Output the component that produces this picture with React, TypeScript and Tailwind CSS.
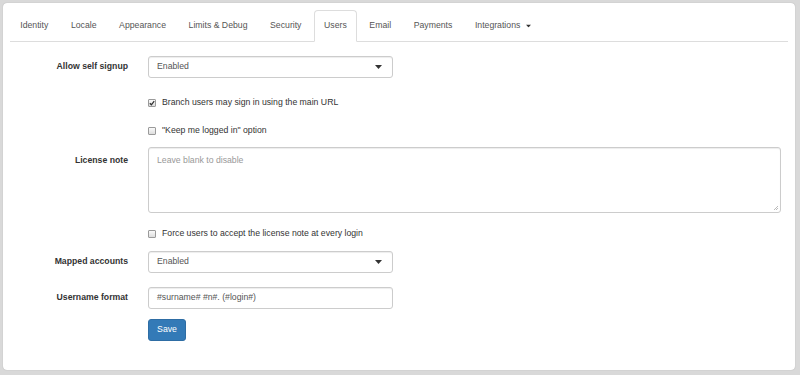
import React from "react";

const tabs = ["Identity", "Locale", "Appearance", "Limits & Debug", "Security", "Users", "Email", "Payments", "Integrations"];

function Caret({ className = "" }: { className?: string }) {
  return (
    <svg width="7" height="4" viewBox="0 0 7 4" className={className}>
      <path d="M0 0 L7 0 L3.5 4 Z" fill="#333" />
    </svg>
  );
}

function Check({ checked }: { checked?: boolean }) {
  return (
    <span className="relative inline-flex h-[8px] w-[8px] shrink-0 items-center justify-center rounded-[1px] border border-[#9a9a9a] bg-gradient-to-b from-[#fafafa] to-[#dedede]">
      {checked && (
        <svg width="6" height="6" viewBox="0 0 6 6" className="absolute">
          <path d="M0.8 3.2 L2.4 4.8 L5.2 1.2" stroke="#333" strokeWidth="1.3" fill="none" />
        </svg>
      )}
    </span>
  );
}

function Label({ children }: { children: React.ReactNode }) {
  return <div className="w-[118px] shrink-0 text-right font-bold text-[#333]">{children}</div>;
}

function Select({ value }: { value: string }) {
  return (
    <div className="flex h-[22px] w-[245px] items-center justify-between rounded-[3px] border border-[#ccc] bg-white pl-[8px] pr-[10px] text-[#555] shadow-[inset_0_1px_1px_rgba(0,0,0,0.075)]">
      <span>{value}</span>
      <Caret />
    </div>
  );
}

export default function App() {
  return (
    <div
      className="h-[375px] w-[800px] bg-[#d9d9d9] pb-[5px] pl-[3px] pr-[5px] pt-[3px] text-[8.7px] text-[#333]"
      style={{ fontFamily: '"Liberation Sans", Arial, sans-serif' }}
    >
      <div className="flex h-full flex-col rounded-[4px] bg-white px-[7px] pt-[7px] shadow-[0_0_1px_rgba(0,0,0,0.3)]">
        <div className="flex border-b border-[#ddd]">
          {tabs.map((t) => {
            const active = t === "Users";
            return (
              <div
                key={t}
                className={
                  "-mb-px mr-[2px] flex h-[32px] items-center gap-[5px] rounded-t-[4px] border px-[9.3px] " +
                  (active ? "border-[#ddd] border-b-white bg-white text-[#555]" : "border-transparent text-[#555]")
                }
              >
                <span>{t}</span>
                {t === "Integrations" && <Caret className="scale-75" />}
              </div>
            );
          })}
        </div>

        <div className="mt-[14px] flex items-center gap-[20px]">
          <Label>Allow self signup</Label>
          <Select value="Enabled" />
        </div>

        <div className="ml-[138px] mt-[17px] flex h-[16px] items-center gap-[6px]">
          <Check checked />
          <span>Branch users may sign in using the main URL</span>
        </div>

        <div className="ml-[138px] mt-[12px] flex h-[16px] items-center gap-[6px]">
          <Check />
          <span>"Keep me logged in" option</span>
        </div>

        <div className="mt-[8px] flex items-start gap-[20px]">
          <div className="pt-[7px]">
            <Label>License note</Label>
          </div>
          <div className="relative h-[66px] w-[633px] rounded-[3px] border border-[#ccc] px-[8px] pt-[6px] text-[#999] shadow-[inset_0_1px_1px_rgba(0,0,0,0.075)]">
            Leave blank to disable
            <svg width="5" height="5" viewBox="0 0 5 5" className="absolute bottom-[2px] right-[2px]">
              <path d="M1 5 L5 1 M3 5 L5 3" stroke="#aaa" strokeWidth="0.8" />
            </svg>
          </div>
        </div>

        <div className="ml-[138px] mt-[13px] flex h-[16px] items-center gap-[6px]">
          <Check />
          <span>Force users to accept the license note at every login</span>
        </div>

        <div className="mt-[9px] flex items-center gap-[20px]">
          <Label>Mapped accounts</Label>
          <Select value="Enabled" />
        </div>

        <div className="mt-[14px] flex items-center gap-[20px]">
          <Label>Username format</Label>
          <div className="flex h-[22px] w-[245px] items-center rounded-[3px] border border-[#ccc] bg-white px-[8px] text-[#555] shadow-[inset_0_1px_1px_rgba(0,0,0,0.075)]">
            #surname# #n#. (#login#)
          </div>
        </div>

        <div className="ml-[138px] mt-[10px]">
          <div className="flex h-[22px] w-[38px] items-center justify-center rounded-[3px] border border-[#2e6da4] bg-[#337ab7] text-white">
            Save
          </div>
        </div>
      </div>
    </div>
  );
}
